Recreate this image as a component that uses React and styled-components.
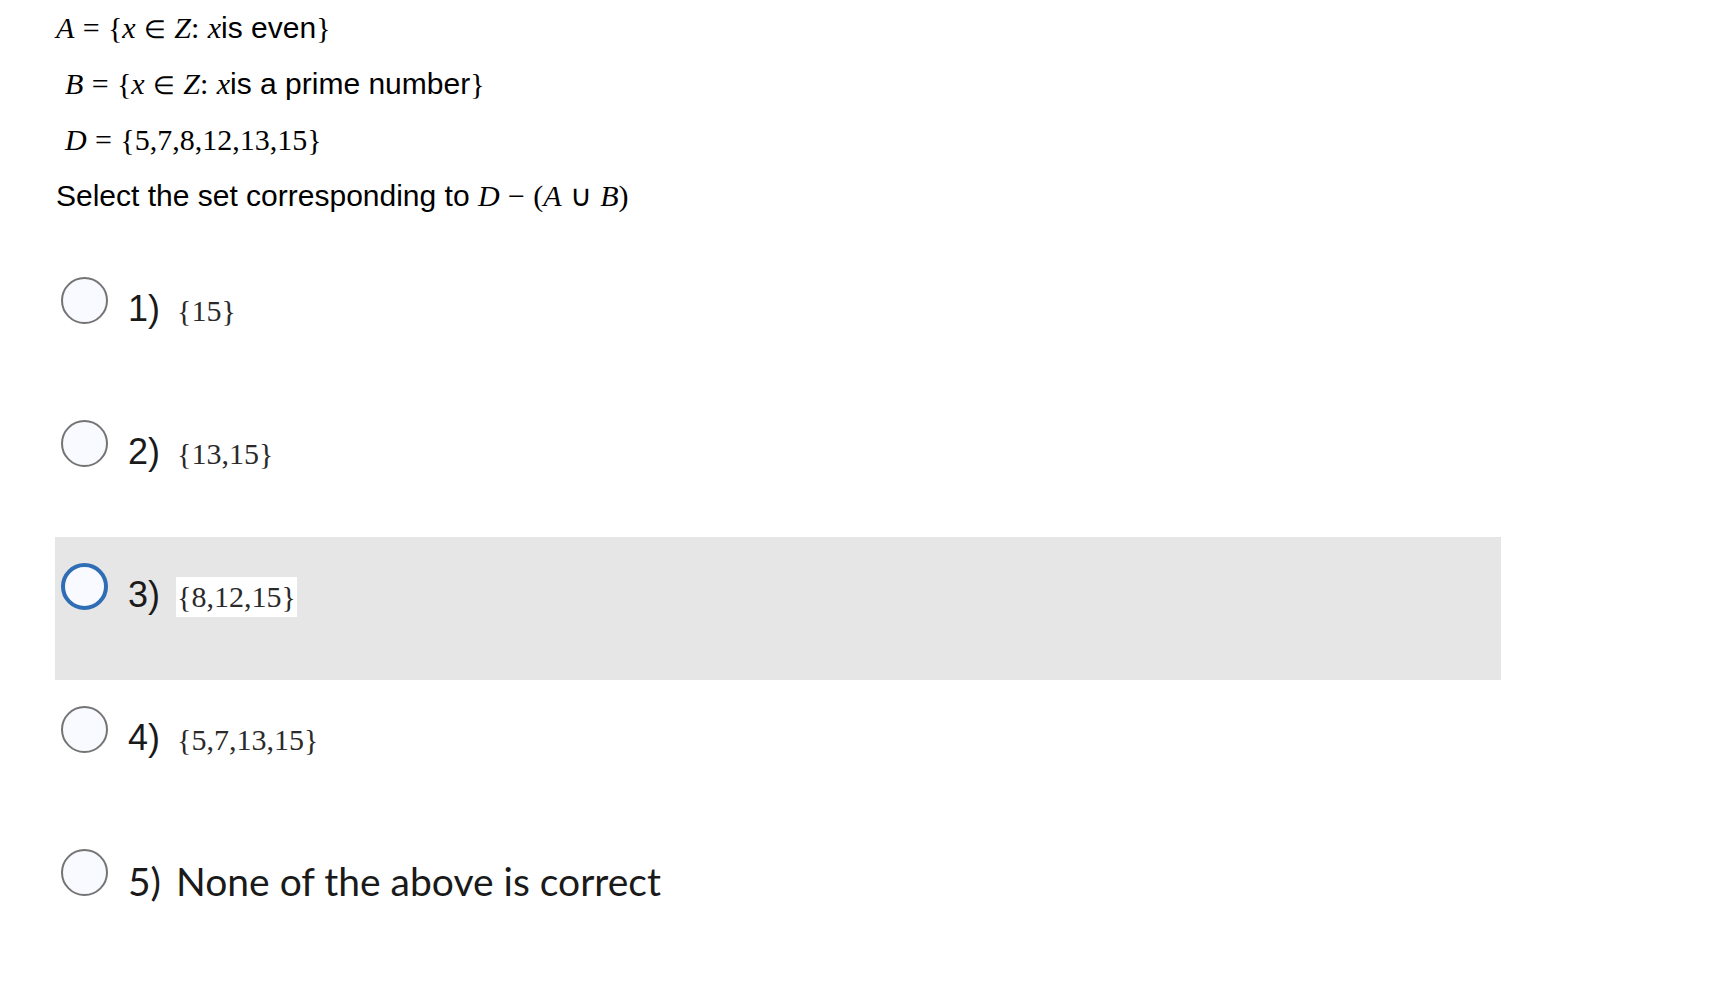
import React from 'react';
import styled, { createGlobalStyle } from 'styled-components';

const GlobalStyle = createGlobalStyle`
  body {
    margin: 0;
    background: #ffffff;
    font-family: "Liberation Sans", Arial, sans-serif;
  }
`;

const Page = styled.div`
  padding: 0 0 40px 55px;
`;

const Stem = styled.div`
  font-size: 30px;
  color: #000;
`;

const StemLine = styled.div`
  height: 56px;
  line-height: 56px;
  padding-left: ${(p) => (p.$indent ? '10px' : '1px')};
  white-space: nowrap;
`;

const M = styled.span`
  font-family: "Liberation Serif", "Times New Roman", serif;
  font-style: ${(p) => (p.$i ? 'italic' : 'normal')};
  font-size: ${(p) => (p.$small ? '25px' : '30px')};
`;

const Options = styled.div`
  width: 1446px;
  margin-top: 27px;
`;

const Row = styled.label`
  display: flex;
  align-items: flex-start;
  height: 143px;
  box-sizing: border-box;
  padding: 26px 0 0 6px;
  background: ${(p) => (p.$active ? '#e6e6e6' : 'transparent')};
  cursor: pointer;
`;

const Radio = styled.span`
  flex: none;
  width: 47px;
  height: 47px;
  box-sizing: border-box;
  border-radius: 50%;
  background: #f8faff;
  border: ${(p) => (p.$active ? '4px solid #2f6db5' : '2px solid #747474')};
`;

const Label = styled.div`
  display: flex;
  align-items: baseline;
  margin: 12px 0 0 20px;
  line-height: 40px;
  color: #1a1a1a;
`;

const Num = styled.span`
  font-family: ${(p) => (p.$lato ? 'Lato, sans-serif' : '"Liberation Sans", Arial, sans-serif')};
  font-size: ${(p) => (p.$lato ? '39px' : '36px')};
  margin-right: ${(p) => (p.$lato ? '15px' : '16px')};
`;

const SetMath = styled.span`
  font-family: "Liberation Serif", "Times New Roman", serif;
  font-size: 30px;
  color: #2a2a2a;
  padding: 0 1px;
  background: ${(p) => (p.$active ? '#ffffff' : 'transparent')};
`;

const Plain = styled.span`
  font-family: Lato, sans-serif;
  font-size: 39px;
  color: #1a1a1a;
`;

const options = [
  { n: '1)', v: '{15}' },
  { n: '2)', v: '{13,15}' },
  { n: '3)', v: '{8,12,15}', active: true },
  { n: '4)', v: '{5,7,13,15}' },
  { n: '5)', text: 'None of the above is correct' },
];

export default function App() {
  return (
    <Page>
      <GlobalStyle />
      <Stem>
        <StemLine>
          <M $i>A</M> <M>=</M> <M>{'{'}</M><M $i>x</M> <M $small>∈</M> <M $i>Z</M><M>:</M> <M $i>x</M>is even<M>{'}'}</M>
        </StemLine>
        <StemLine $indent>
          <M $i>B</M> <M>=</M> <M>{'{'}</M><M $i>x</M> <M $small>∈</M> <M $i>Z</M><M>:</M> <M $i>x</M>is a prime number<M>{'}'}</M>
        </StemLine>
        <StemLine $indent>
          <M $i>D</M> <M>=</M> <M>{'{5,7,8,12,13,15}'}</M>
        </StemLine>
        <StemLine>
          Select the set corresponding to <M $i>D</M> <M>−</M> <M>(</M><M $i>A</M> <M>∪</M> <M $i>B</M><M>)</M>
        </StemLine>
      </Stem>
      <Options>
        {options.map((o) => (
          <Row key={o.n} $active={o.active}>
            <Radio $active={o.active} />
            <Label>
              <Num $lato={!!o.text}>{o.n}</Num>
              {o.text ? <Plain>{o.text}</Plain> : <SetMath $active={o.active}>{o.v}</SetMath>}
            </Label>
          </Row>
        ))}
      </Options>
    </Page>
  );
}
